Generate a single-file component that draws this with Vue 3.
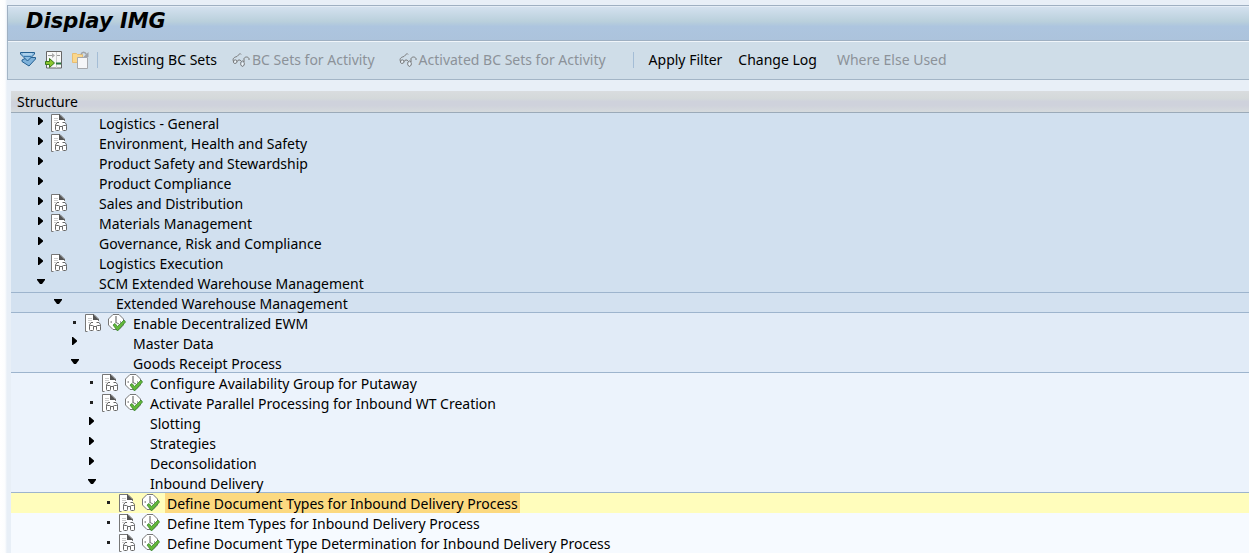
<script setup>
import { ref } from 'vue'

const rows = [
  { level: 0, kind: 'closed', doc: true, text: 'Logistics - General' },
  { level: 0, kind: 'closed', doc: true, text: 'Environment, Health and Safety' },
  { level: 0, kind: 'closed', text: 'Product Safety and Stewardship' },
  { level: 0, kind: 'closed', text: 'Product Compliance' },
  { level: 0, kind: 'closed', doc: true, text: 'Sales and Distribution' },
  { level: 0, kind: 'closed', doc: true, text: 'Materials Management' },
  { level: 0, kind: 'closed', text: 'Governance, Risk and Compliance' },
  { level: 0, kind: 'closed', doc: true, text: 'Logistics Execution' },
  { level: 0, kind: 'open', text: 'SCM Extended Warehouse Management' },
  { level: 1, kind: 'open', text: 'Extended Warehouse Management' },
  { level: 2, kind: 'leaf', doc: true, text: 'Enable Decentralized EWM' },
  { level: 2, kind: 'closed', text: 'Master Data' },
  { level: 2, kind: 'open', text: 'Goods Receipt Process' },
  { level: 3, kind: 'leaf', doc: true, text: 'Configure Availability Group for Putaway' },
  { level: 3, kind: 'leaf', doc: true, text: 'Activate Parallel Processing for Inbound WT Creation' },
  { level: 3, kind: 'closed', text: 'Slotting' },
  { level: 3, kind: 'closed', text: 'Strategies' },
  { level: 3, kind: 'closed', text: 'Deconsolidation' },
  { level: 3, kind: 'open', text: 'Inbound Delivery' },
  { level: 4, kind: 'leaf', doc: true, text: 'Define Document Types for Inbound Delivery Process' },
  { level: 4, kind: 'leaf', doc: true, text: 'Define Item Types for Inbound Delivery Process' },
  { level: 4, kind: 'leaf', doc: true, text: 'Define Document Type Determination for Inbound Delivery Process' },
]
const selected = ref(19)
</script>

<template>
  <div class="screen">
    <main class="window">
      <header class="titlebar"><h1>Display IMG</h1></header>

      <div class="toolbar" role="toolbar" aria-label="Application toolbar">
        <button class="tool" aria-label="Expand subtree">
          <svg width="18" height="18" viewBox="0 0 18 18">
            <path d="M8 6.500h8.500v1.500L10 15 3 10.500V9z" fill="#7fb2da" stroke="#235f91" />
            <path d="M1.500 1.500h14V3L8.500 10 1.500 3z" fill="#8fbee2" stroke="#235f91" />
            <path d="M4 3h9" stroke="#c9e2f3" />
            <path d="M5 5.500h7" stroke="#3a78ab" />
          </svg>
        </button>
        <button class="tool" aria-label="Position">
          <svg width="18" height="18" viewBox="0 0 18 18">
            <path d="M1.500.500v16.500h15V.500z" fill="#f7f8f8" stroke="#666" />
            <path d="M11.500 1v16" stroke="#ccc" />
            <path d="M3 4.500h5M12 4.500h3" stroke="#999" />
            <path d="M7 2l3 2.500L7 7z" fill="#aaa" />
            <path d="M.5 10.500h4V7.500l5 4.500-5 4.500v-3h-4z" fill="#8bc52d" stroke="#39791d" />
            <path d="M11 12.500h5" stroke="#24773c" stroke-width="2" />
          </svg>
        </button>
        <button class="tool" aria-label="Copy" disabled>
          <svg width="18" height="18" viewBox="0 0 18 18">
            <path d="M1.500 11.500v-9h4l1 1h5v8z" fill="#fbd78b" stroke="#e8bd70" />
            <path d="M6.500 6.500h10v11h-10z" fill="#f5f6f8" stroke="#a7a9ad" />
            <path d="M10 3.500c1-3 4-3 5.500 0" fill="none" stroke="#a0a3a8" stroke-width="1.500" />
            <path d="M17.500 1v5h-5z" fill="#a0a3a8" />
          </svg>
        </button>
        <span class="divider"></span>
        <button class="label existing">Existing BC Sets</button>
        <button class="label sets" disabled>
          <svg width="18" height="16" viewBox="0 0 18 16"><use href="#glasses" /></svg>BC Sets for Activity
        </button>
        <button class="label activated" disabled>
          <svg width="18" height="16" viewBox="0 0 18 16"><use href="#glasses" /></svg>Activated BC Sets for Activity
        </button>
        <span class="divider"></span>
        <button class="label filter">Apply Filter</button>
        <button class="label log">Change Log</button>
        <button class="label" disabled>Where Else Used</button>
      </div>

      <section class="structure">
        <h2>Structure</h2>
        <ul role="tree" aria-label="Structure">
          <li
            v-for="(row, i) in rows"
            :key="row.text"
            role="treeitem"
            :aria-level="row.level + 1"
            :aria-expanded="row.kind === 'leaf' ? undefined : row.kind === 'open'"
            :aria-selected="selected === i"
            :class="['row', 'level' + row.level, { open: row.kind === 'open', selected: selected === i }]"
            @click="selected = i"
          >
            <span v-if="row.kind === 'leaf'" class="toggle">
              <svg width="8" height="13" viewBox="0 0 8 13"><path d="M2 5h3v3H2z" fill="#222" /></svg>
            </span>
            <button v-else class="toggle" :aria-label="'Toggle ' + row.text">
              <svg v-if="row.kind === 'closed'" width="8" height="13" viewBox="0 0 8 13">
                <path d="M1 1h1l4 3.500v1L2 9H1z" />
              </svg>
              <svg v-else width="8" height="13" viewBox="0 0 8 13"><path d="M0 3h8v1L5 8H3L0 4z" /></svg>
            </button>
            <span class="cell">
              <button v-if="row.doc" :aria-label="'Documentation for ' + row.text">
                <svg width="17" height="18" viewBox="0 0 17 18"><use href="#document" /></svg>
              </button>
            </span>
            <span class="cell">
              <button v-if="row.kind === 'leaf'" :aria-label="'Execute ' + row.text">
                <svg width="18" height="18" viewBox="0 0 18 18"><use href="#execute" /></svg>
              </button>
            </span>
            <span class="name">{{ row.text }}</span>
          </li>
        </ul>
      </section>
    </main>

    <svg class="symbols" width="0" height="0" aria-hidden="true">
      <defs>
        <g id="glasses">
          <g fill="none" stroke="#777">
            <path d="M1.500 9.500C0 6 3 5 5 4.500L8 1.500l1 1M3 11.500c-1 0-2-1-1.500-2.500s3-1.500 3.500 0-1 2.500-2 2.500z" />
            <path d="M5 9.500c1-2 3-2 4-.5M9 10c-1 2 0 4 1.500 4.500 1.500-.5 2.500-2.500 1.500-4-.5-2-2-2-3-.500z" />
            <path d="M12 10V6.500c1-2 4-2 5 0V8" />
          </g>
          <path d="M2.500 10l1.500-1M10 13l1-2" stroke="#fff" />
        </g>
        <g id="document">
          <path d="M1 1h8l5 5v11H1z" fill="#fff" />
          <path d="M.5 17.500V.5H9L13.500 5v2M.5 17.500h2" fill="none" stroke="#777" />
          <path d="M8 0l6 6H8z" fill="#555" />
          <path d="M3 4.500h4M3 6.500h4M3 8.500h2" stroke="#ccc" />
          <path d="M4.500 14v-3l1.500-2.500h2M11.500 8.500h2.500l1.500 2V16" fill="none" stroke="#666" />
          <g fill="#fff" stroke="#666">
            <rect x="4.500" y="11.500" width="4" height="5" rx="1" />
            <rect x="11.500" y="11.500" width="4" height="5" rx="1" />
          </g>
          <path d="M8.500 12.500h3" stroke="#666" />
        </g>
        <g id="execute">
          <path d="M5 .5h6L15.500 5v6L11 15.500H5L.5 11V5z" fill="#fff" stroke="#777" />
          <path d="M8 2v7M2.500 8H4M12 8h1" fill="none" stroke="#555" />
          <path d="M8 8.500l3 1.500" stroke="#777" />
          <path d="M5 11l2-1.500 2.500 3L16 6l1.500 2L9.500 17z" fill="#63b839" stroke="#38842d" stroke-width=".8" />
        </g>
      </defs>
    </svg>
  </div>
</template>

<style>
body {
  margin: 0;
  background: #e8eff7;
}
</style>

<style scoped>
.screen {
  height: 100vh;
  overflow: hidden;
  box-sizing: border-box;
  padding: 5px 0 0 7px;
  background: linear-gradient(90deg, #fff 0, #fcfdfe 5px, #e8eff7 7px);
  color: #000;
  font: 14px/20px "Noto Sans", sans-serif;
}
.window {
  background: #e8eff7;
}
h1, h2, ul {
  margin: 0;
  padding: 0;
}
button {
  display: flex;
  align-items: center;
  padding: 0;
  border: 0;
  background: none;
  color: inherit;
  font: inherit;
  white-space: nowrap;
}
button:disabled {
  color: #8c9299;
}
svg {
  display: block;
  flex: none;
}
.titlebar {
  height: 34px;
  border: solid #9fb0c2;
  border-width: 1px 0 1px 1px;
  box-shadow: inset 0 1px #e4edf6;
  background: linear-gradient(#d5e2f0, #bad0dc 45%, #adc5df 60%, #acc3dc);
}
h1 {
  padding-left: 18px;
  font: italic bold 21px/30px "DejaVu Sans", sans-serif;
}
.toolbar {
  display: flex;
  align-items: center;
  height: 38px;
  padding-left: 11px;
  border: solid #a3b5c6;
  border-width: 0 0 1px 1px;
  box-shadow: inset 0 1px #f0f5fa;
  background: #cfdde8;
}
.tool {
  margin-right: 8px;
}
.label {
  gap: 2px;
}
.divider {
  width: 1px;
  height: 16px;
  margin-right: 15px;
  background: #a4bdd6;
}
.existing {
  margin-right: 15px;
}
.sets {
  margin-right: 24px;
}
.activated {
  margin-right: 27px;
}
.filter {
  margin-right: 16px;
}
.log {
  margin-right: 20px;
}
.structure {
  margin: 11px 0 0 4px;
}
h2 {
  padding-left: 6px;
  border-bottom: 1px solid #9baab8;
  background: linear-gradient(#d9dcdf, #d4d9da 35%, #cfd2dc 50%, #cfd2dc 70%, #d6dbdd);
  font: inherit;
  line-height: 21px;
}
ul {
  list-style: none;
}
.row {
  display: grid;
  grid-template-columns: 14px 23px 23px 1fr;
  box-sizing: border-box;
  height: 20px;
  padding-left: 26px;
  background: #d1e0ef;
  line-height: 22px;
  white-space: nowrap;
}
.level1 {
  padding-left: 43px;
  background: #d3e1f0;
}
.level2 {
  padding-left: 60px;
  background: #e1ebf7;
}
.level3 {
  padding-left: 77px;
  background: #ecf3fc;
}
.level4 {
  padding-left: 94px;
  background: #f6faff;
}
.open {
  border-bottom: 1px solid #9db4cd;
}
.toggle {
  width: 8px;
  height: 19px;
  display: flex;
  align-items: center;
}
.cell {
  height: 19px;
  padding-top: 1px;
  box-sizing: border-box;
}
.name {
  justify-self: start;
  height: 20px;
  padding: 0 2px;
}
.selected {
  background: #fffdbc;
}
.selected .name {
  background: #fcd980;
}
.symbols {
  position: absolute;
}
</style>
